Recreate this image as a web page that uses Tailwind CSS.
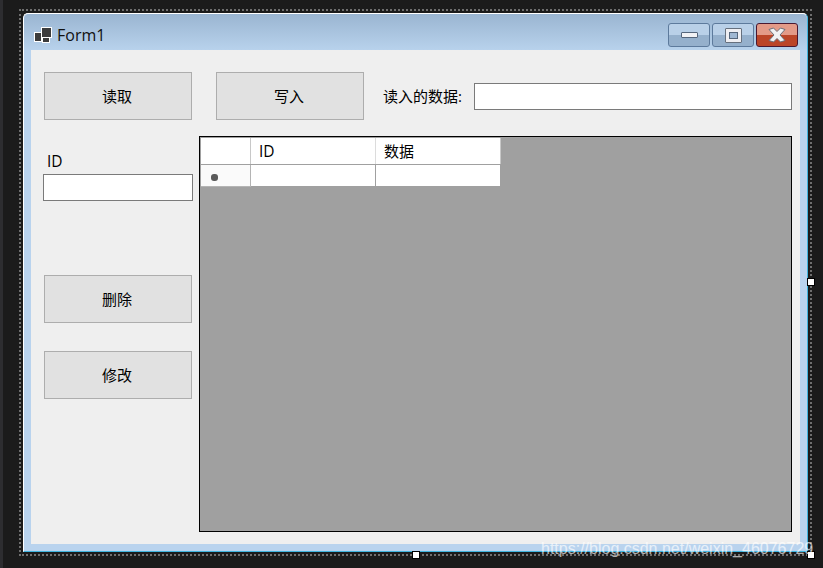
<!DOCTYPE html>
<html>
<head>
<meta charset="utf-8">
<script src="https://cdn.jsdelivr.net/npm/@tailwindcss/browser@4"></script>
</head>
<body class="m-0">
<div class="relative w-[823px] h-[568px] overflow-hidden bg-[#1b1b1b] pl-[19px] pt-[9px] text-[15px] text-black [font-family:'Open_Sans','Noto_Sans_CJK_SC',sans-serif]">
  <div class="absolute left-0 top-0 w-[3px] h-full bg-[#2d2d30]"></div>
  <!-- designer selection -->
  <div class="relative w-[793px] h-[547px] border-2 border-dotted border-[#6f6f6f] pl-[2px] pt-[2px]">
    <!-- window -->
    <div class="w-[785px] h-[539px] rounded-t-[5px] border border-white border-r-[#3fb4de] border-b-[#3fb4de] bg-[#b9d3ee] flex flex-col">
      <div class="h-[36px] shrink-0 rounded-t-[5px] bg-gradient-to-b from-[#9ab5d1] to-[#b8d2ec] flex items-center pl-[10px] pr-[9px] pt-[6px]">
        <svg width="18" height="16" viewBox="0 0 18 16" class="shrink-0">
          <rect x="7.5" y="0.5" width="10" height="10" fill="#3c3c3c" stroke="#fff"/>
          <rect x="0.5" y="5.5" width="7" height="9" fill="#3c3c3c" stroke="#fff"/>
          <rect x="8.5" y="10.5" width="7" height="5" fill="#3c3c3c" stroke="#fff"/>
        </svg>
        <span class="ml-[5px] text-[16px] leading-none text-[#111]">Form1</span>
        <div class="ml-auto flex gap-[2px] items-start">
          <div class="w-[42px] h-[24px] rounded-[3px] border border-[#5d7a9c] bg-[linear-gradient(#b9d0e8_0_50%,#95b0cc_50%_100%)] flex items-center justify-center">
            <div class="w-[17px] h-[6px] rounded-[1px] bg-[#f2f2f5] border border-[#55667c]"></div>
          </div>
          <div class="w-[42px] h-[24px] rounded-[3px] border border-[#5d7a9c] bg-[linear-gradient(#b9d0e8_0_50%,#95b0cc_50%_100%)] flex items-center justify-center">
            <div class="w-[17px] h-[15px] rounded-[1px] bg-[#eeeef2] border border-[#66707e] p-[3px]"><div class="w-full h-full bg-[#9fb7d2] border border-[#55667c]"></div></div>
          </div>
          <div class="w-[42px] h-[24px] rounded-[3px] border border-[#4a1830] bg-[linear-gradient(#e39a88_0_50%,#bb4528_50%_100%)] flex items-center justify-center">
            <svg width="20" height="16" viewBox="0 0 20 16"><path d="M2 2.5 L6.5 1 L10 4.5 L13.5 1 L18 2.5 L13 8 L18 13.5 L13.5 15 L10 11.5 L6.5 15 L2 13.5 L7 8 Z" fill="#f1f1f3" stroke="#6c6f78" stroke-width="1"/></svg>
          </div>
        </div>
      </div>
      <!-- client area -->
      <div class="mx-[7px] w-[769px] h-[494px] bg-[#efefef] flex gap-[6px] pl-[12px] pt-[22px] relative">
        <div class="w-[150px] shrink-0 flex flex-col">
          <button class="ml-px w-[148px] h-[48px] border border-[#adadad] bg-[#e1e1e1] pt-px pr-[2px]">读取</button>
          <div class="mt-[29px] ml-[4px] h-[25px] leading-[25px] text-[15.5px]">ID</div>
          <div class="h-[27px] border border-[#7a7a7a] bg-white"></div>
          <button class="ml-px mt-[74px] w-[148px] h-[48px] border border-[#adadad] bg-[#e1e1e1] pr-[2px]">删除</button>
          <button class="ml-px mt-[28px] w-[148px] h-[48px] border border-[#adadad] bg-[#e1e1e1] pt-px pr-[2px]">修改</button>
        </div>
        <div class="w-[593px] shrink-0 flex flex-col">
          <div class="h-[48px] flex items-center">
            <button class="ml-[17px] w-[148px] h-[48px] border border-[#adadad] bg-[#e1e1e1] pt-px pr-[2px]">写入</button>
            <span class="ml-[19px] w-[91px] pt-px whitespace-nowrap">读入的数据:</span>
            <div class="w-[318px] h-[27px] border border-[#7a7a7a] bg-white"></div>
          </div>
          <!-- data grid -->
          <div class="mt-[16px] h-[396px] border border-black bg-[#a0a0a0]">
            <div class="w-[300px] ml-px mt-px flex h-[27px] bg-white border-b border-[#a0a0a0] leading-[27px]">
              <div class="w-[50px] border-r border-[#c8c8c8]"></div>
              <div class="w-[125px] pl-[8px] border-r border-[#dcdcdc] text-[15.5px]">ID</div>
              <div class="w-[125px] pl-[8px] border-r border-[#c8c8c8]">数据</div>
            </div>
            <div class="w-[299px] ml-px flex h-[21px] bg-white">
              <div class="w-[50px] h-[22px] bg-[#fafafa] border-r border-b border-[#b4b4b4] flex items-center pl-[10px]"><div class="w-[7px] h-[7px] mt-[3px] rounded-[3px] bg-[#5a5a5a]"></div></div>
              <div class="w-[125px] border-r border-[#a0a0a0]"></div>
              <div class="w-[124px]"></div>
            </div>
          </div>
        </div>
      </div>
    </div>
    <!-- handles -->
    <div class="absolute left-[391px] bottom-[-5px] w-[8px] h-[8px] bg-white border border-black"></div>
    <div class="absolute right-[-5px] top-[267px] w-[8px] h-[8px] bg-white border border-black"></div>
    <div class="absolute right-[-5px] bottom-[-5px] w-[8px] h-[8px] bg-white border border-black"></div>
  </div>
  <!-- watermark -->
  <div class="absolute left-[541px] top-[539px] text-[16px] leading-[20px] text-white/65 whitespace-nowrap [font-family:'Liberation_Sans',sans-serif]">https://blog.csdn.net/weixin_46076729</div>
</div>
</body>
</html>
